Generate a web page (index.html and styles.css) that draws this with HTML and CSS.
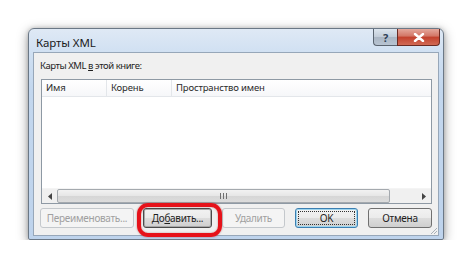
FILE: index.html
```html
<!DOCTYPE html>
<html lang="ru">
<head>
<meta charset="utf-8">
<link rel="stylesheet" href="styles.css">
</head>
<body>
<div class="stage">
  <div class="dialog">
    <div class="titlebar">
      <span class="title">Карты XML</span>
      <div class="caption-btns">
        <div class="cbtn help">?</div>
        <div class="cbtn close">
          <svg width="12" height="9" viewBox="0 0 12 9"><path d="M2 1 L10 8 M10 1 L2 8" stroke="#fff" stroke-width="2.4" stroke-linecap="round"/></svg>
        </div>
      </div>
    </div>
    <div class="client">
      <div class="label">Карты XML <u>в</u> этой книге:</div>
      <div class="list">
        <div class="header">
          <div class="col c1">Имя</div>
          <div class="col c2">Корень</div>
          <div class="col c3">Пространство имен</div>
        </div>
        <div class="rows"></div>
        <div class="hscroll">
          <div class="arrow">
            <svg width="4" height="7" viewBox="0 0 4 7"><path d="M4 0 L0 3.5 L4 7Z" fill="#444"/></svg>
          </div>
          <div class="track">
            <div class="thumb"><span class="grip"></span></div>
          </div>
          <div class="arrow">
            <svg width="4" height="7" viewBox="0 0 4 7"><path d="M0 0 L4 3.5 L0 7Z" fill="#444"/></svg>
          </div>
        </div>
      </div>
      <div class="buttons">
        <div class="btn disabled b-rename">Переименовать...</div>
        <div class="btn-wrap">
          <div class="btn b-add">До<u>б</u>авить...</div>
          <div class="ring"></div>
        </div>
        <div class="btn disabled b-del">Удалить</div>
        <div class="btn default b-ok"><span class="focus">OK</span></div>
        <div class="btn b-cancel">Отмена</div>
      </div>
      <svg class="grip-corner" width="8" height="8" viewBox="0 0 8 8"><path d="M7 1 L1 7 M7 4 L4 7" stroke="#a8b0b8" stroke-width="1"/></svg>
    </div>
  </div>
</div>
</body>
</html>
```
FILE: styles.css
```css
html, body {
  margin: 0;
  padding: 0;
  background: #fff;
}
body {
  font-family: "Noto Sans", "Open Sans", sans-serif;
  font-size: 9.5px;
  letter-spacing: -0.15px;
  color: #1e1e1e;
}
.stage {
  padding: 28px 0 0 28px;
}
.dialog {
  width: 414px;
  height: 210px;
  border: 1px solid #6b7886;
  border-radius: 6px 6px 2px 2px;
  background: linear-gradient(180deg, #dfe9f5 0px, #d0e0f2 24px, #c3d7ee 60px, #bed3ec 100%);
  box-shadow: 0 3px 12px rgba(0,0,0,0.38), 0 0 4px rgba(0,0,0,0.18);
  display: flex;
  flex-direction: column;
}
.titlebar {
  height: 23px;
  display: flex;
  align-items: flex-start;
  justify-content: space-between;
  position: relative;
}
.title {
  font-size: 11.5px;
  letter-spacing: -0.1px;
  color: #1a1a1a;
  margin: 6px 0 0 7px;
}
.caption-btns {
  display: flex;
  margin-right: 3px;
}
.cbtn {
  height: 16px;
  border: 1px solid #5a6470;
  border-top: none;
  display: flex;
  align-items: center;
  justify-content: center;
}
.help {
  width: 23px;
  border-radius: 0 0 0 4px;
  background: linear-gradient(180deg, #dce5ee 0%, #c2ccd8 50%, #aab6c4 51%, #b8c4d2 100%);
  color: #2c3e55;
  font-weight: bold;
  font-size: 11px;
  border-right: none;
}
.close {
  width: 41px;
  border-radius: 0 0 4px 0;
  background: linear-gradient(180deg, #e4a89c 0%, #d27565 45%, #c2402c 50%, #d16a55 100%);
  border-color: #6a2a22;
}
.client {
  flex: 1;
  margin: 0 4px 3px 4px;
  background: #f0f0f0;
  border: 1px solid #97a7b9;
  padding: 6px 6px 0 6px;
  display: flex;
  flex-direction: column;
  position: relative;
}
.label {
  height: 14px;
  line-height: 14px;
  margin-bottom: 6px;
  color: #1e1e1e;
  letter-spacing: -0.45px;
}
.list {
  margin-left: 1px;
  height: 123px;
  border: 1px solid #8e99a4;
  background: #fff;
  display: flex;
  flex-direction: column;
}
.header {
  height: 16px;
  display: flex;
  border-bottom: 1px solid #e3e6ea;
  background: linear-gradient(180deg, #ffffff, #f6f7f9);
}
.col {
  line-height: 15px;
  padding-left: 4px;
  color: #2a2a2a;
  border-right: 1px solid #e3e6ea;
}
.c1 { width: 60px; }
.c2 { width: 60px; }
.c3 { flex: 1; border-right: none; }
.rows {
  flex: 1;
}
.hscroll {
  height: 14px;
  display: flex;
  align-items: center;
  background: #f0f0f0;
  border-top: 1px solid #f4f4f4;
}
.arrow {
  width: 15px;
  height: 14px;
  display: flex;
  align-items: center;
  justify-content: center;
}
.track {
  flex: 1;
  height: 14px;
  display: flex;
  align-items: center;
  padding-right: 26px;
}
.thumb {
  flex: 1;
  height: 12px;
  border: 1px solid #a4a9ae;
  border-radius: 2px;
  background: linear-gradient(180deg, #f2f2f2 0%, #e6e6e6 50%, #d6d6d6 51%, #dcdcdc 100%);
  display: flex;
  align-items: center;
  justify-content: center;
}
.grip {
  width: 7px;
  height: 6px;
  background: repeating-linear-gradient(90deg, #707070 0 1px, transparent 1px 3px);
}
.buttons {
  display: flex;
  margin-top: 4px;
  height: 20px;
}
.btn {
  height: 18px;
  border: 1px solid #707070;
  border-radius: 3px;
  background: linear-gradient(180deg, #f2f2f2 0%, #ebebeb 50%, #dddddd 51%, #cfcfcf 100%);
  display: flex;
  align-items: center;
  justify-content: center;
  color: #1e1e1e;
  font-size: 10px;
  letter-spacing: -0.3px;
}
.btn.disabled {
  border-color: #c4c8cc;
  background: #f4f4f4;
  color: #a0a0a0;
}
.b-rename { width: 92px; }
.btn-wrap {
  position: relative;
  margin-left: 9px;
}
.b-add {
  width: 67px;
  border-color: #4a4a4a;
  box-shadow: inset 0 0 0 1px #a8a8a8;
}
.ring {
  position: absolute;
  left: -6px;
  top: -5px;
  width: 77px;
  height: 26px;
  border: 4.5px solid #e6121a;
  border-radius: 11px;
  box-shadow: 0 0 2px rgba(120,0,0,0.5), inset 0 0 2px rgba(120,0,0,0.4);
}
.b-del { width: 61px; margin-left: 10px; }
.b-ok {
  width: 61px;
  margin-left: 10px;
  border-color: #3c7fb1;
  box-shadow: inset 0 0 0 1px #9ed6f0;
}
.focus {
  width: 55px;
  height: 12px;
  border: 1px dotted #333;
  display: flex;
  align-items: center;
  justify-content: center;
}
.b-cancel { width: 62px; margin-left: 10px; }
.grip-corner {
  position: absolute;
  right: 0;
  bottom: 0;
}
u { text-decoration-thickness: 1px; text-underline-offset: 1px; }
```
